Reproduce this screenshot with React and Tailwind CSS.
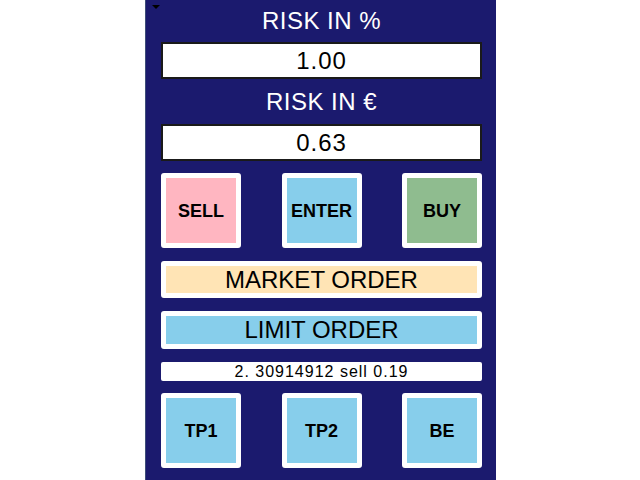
import React from "react";

const Square = ({ label, color }) => (
  <button
    className={`w-[80px] h-[75px] border-[5px] border-white rounded-[3px] flex items-center justify-center pt-[2px] text-[18px] font-bold text-black ${color}`}
  >
    {label}
  </button>
);

const App = () => {
  return (
    <div className="w-[640px] h-[480px] bg-white overflow-hidden font-['Liberation_Sans',Arial,sans-serif]">
      <div className="relative ml-[145px] w-[351px] h-[480px] bg-[#1b1a6e] border-l border-[#3d4d78] pl-[15px] pr-[14px] flex flex-col">
        {/* little dropdown arrow */}
        <div className="absolute left-[6px] top-[5px] w-0 h-0 border-l-[4px] border-r-[4px] border-t-[4px] border-l-transparent border-r-transparent border-t-black" />

        <div className="h-[42px] flex items-center justify-center text-white text-[24px] tracking-[0.5px]">
          RISK IN %
        </div>
        <div className="h-[37px] bg-white border-2 border-[#1a1a1a] flex items-center justify-center text-[24px] text-black tracking-[1px]">
          1.00
        </div>

        <div className="h-[45px] flex items-center justify-center text-white text-[24px] tracking-[0.5px]">
          RISK IN €
        </div>
        <div className="h-[37px] bg-white border-2 border-[#1a1a1a] flex items-center justify-center text-[24px] text-black tracking-[1px]">
          0.63
        </div>

        <div className="mt-[12px] flex justify-between">
          <Square label="SELL" color="bg-[#ffb6c1]" />
          <Square label="ENTER" color="bg-[#87ceeb]" />
          <Square label="BUY" color="bg-[#8fbc8f]" />
        </div>

        <div className="mt-[13px] h-[37px] border-[5px] border-white rounded-[3px] bg-[#ffe4b5] flex items-center justify-center text-[24px] text-black">
          MARKET ORDER
        </div>
        <div className="mt-[13px] h-[38px] border-[5px] border-white rounded-[3px] bg-[#87ceeb] flex items-center justify-center text-[24px] text-black">
          LIMIT ORDER
        </div>

        <div className="mt-[13px] h-[19px] bg-white rounded-[2px] flex items-center justify-center text-[16px] text-black tracking-[1px]">
          2. 30914912 sell 0.19
        </div>

        <div className="mt-[12px] flex justify-between">
          <Square label="TP1" color="bg-[#87ceeb]" />
          <Square label="TP2" color="bg-[#87ceeb]" />
          <Square label="BE" color="bg-[#87ceeb]" />
        </div>
      </div>
    </div>
  );
};

export default App;
